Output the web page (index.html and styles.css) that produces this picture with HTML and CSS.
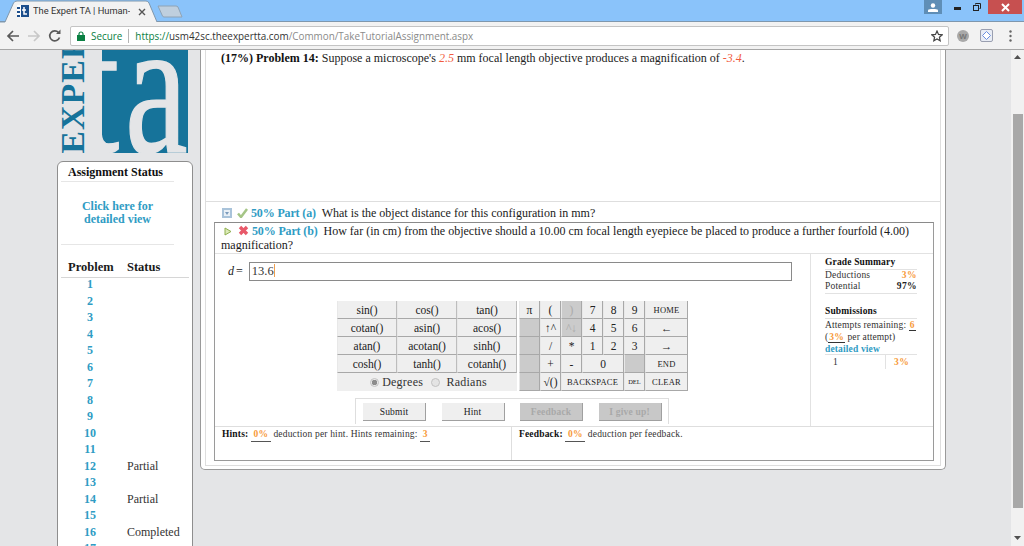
FILE: index.html
```html
<!DOCTYPE html>
<html lang="en">
<head>
<meta charset="utf-8">
<title>The Expert TA</title>
<link rel="stylesheet" href="styles.css">
</head>
<body>
<header class="chrome">
  <div class="tabbar">
    <div class="tab">
      <svg class="tab-shape" width="157" height="22" viewBox="0 0 157 22"><path d="M0 22H5L13.500 3Q14.500 1 17 1H146Q148 1 149 3L157 22" fill="#f2f2f2" stroke="#7f97ad"/></svg>
      <svg class="favicon" width="12" height="12" viewBox="0 0 12 12"><rect width="12" height="12" fill="#fff"/><rect x="4" width="8" height="12" fill="#1d4f8c"/><rect x="0" y="2" width="3" height="2" fill="#1d4f8c"/><rect x="0" y="6" width="3" height="2" fill="#1d4f8c"/><rect x="0" y="10" width="3" height="2" fill="#1d4f8c"/><path d="M7 2v7h3M5 5h4" stroke="#fff" stroke-width="1.500" fill="none"/></svg>
      <span class="tab-title">The Expert TA | Human-I</span>
      <svg class="tab-close" width="8" height="8" viewBox="0 0 8 8"><path d="M1 1l6 6M7 1l-6 6" stroke="#555" stroke-width="1.400"/></svg>
    </div>
    <svg class="newtab" width="26" height="13" viewBox="0 0 26 13"><path d="M1 1H19Q20 1 21 2L25 12H7Q6 12 5.500 11Z" fill="#bfcfde" stroke="#8ea3b6"/></svg>
    <div class="winctl">
      <div class="user"><svg width="10" height="9" viewBox="0 0 10 9"><circle cx="5" cy="2.500" r="2.200" fill="#fff"/><path d="M0 9V7.500Q0 6 3 6H7Q10 6 10 7.500V9Z" fill="#fff"/></svg></div>
      <svg class="ctl-min" width="7" height="3" viewBox="0 0 7 3"><rect width="7" height="3" fill="#222"/></svg>
      <svg class="ctl-max" width="8" height="8" viewBox="0 0 8 8"><path d="M2.500 1.500V.5H7.500V5.500H6.500" fill="none" stroke="#222"/><rect x=".5" y="2.500" width="5" height="5" fill="none" stroke="#222"/></svg>
      <div class="close"><svg width="9" height="9" viewBox="0 0 9 9"><path d="M1 1l7 7M8 1l-7 7" stroke="#fff" stroke-width="2"/></svg></div>
    </div>
  </div>
  <div class="toolbar">
    <svg class="nav" width="14" height="14" viewBox="0 0 14 14"><path d="M13 7H2M7 2L2 7l5 5" fill="none" stroke="#5a5a5a" stroke-width="1.700"/></svg>
    <svg class="nav" width="14" height="14" viewBox="0 0 14 14"><path d="M1 7h11M7 2l5 5-5 5" fill="none" stroke="#c8c8c8" stroke-width="1.700"/></svg>
    <svg class="nav" width="14" height="14" viewBox="0 0 14 14"><path d="M11.500 8.500A5 5 0 1 1 10.500 3.500" fill="none" stroke="#5a5a5a" stroke-width="1.700"/><path d="M8 5h4.500V.5z" fill="#5a5a5a"/></svg>
    <div class="omnibox">
      <svg class="lock" width="8" height="10" viewBox="0 0 8 10"><rect y="4" width="8" height="6" fill="#0b8043"/><path d="M2 4.500V3a2 2 0 0 1 4 0v1.500" fill="none" stroke="#0b8043" stroke-width="1.200"/></svg>
      <span class="secure">Secure</span>
      <span class="url"><span class="https">https://</span><span class="host">usm42sc.theexpertta.com</span>/Common/TakeTutorialAssignment.aspx</span>
      <svg class="star" width="12" height="12" viewBox="0 0 12 12"><path d="M6 1l1.500 3.400 3.700.4-2.800 2.400.8 3.600L6 9l-3.200 1.800.8-3.600L.8 4.800l3.700-.4z" fill="none" stroke="#444" stroke-width="1.200"/></svg>
    </div>
    <svg class="ext ext-w" width="14" height="14" viewBox="0 0 14 14"><circle cx="7" cy="7" r="6" fill="#a9a9a9"/><text x="7" y="10" class="ext-w-t" text-anchor="middle">W</text></svg>
    <svg class="ext ext-d" width="14" height="14" viewBox="0 0 14 14"><rect x=".5" y=".5" width="12" height="12" rx="1.500" fill="#e9edf5" stroke="#9a9fb0"/><path d="M6.500 2.500l4 4-4 4-4-4z" fill="#fff" stroke="#6a8fe0"/></svg>
    <svg class="dots" width="3" height="12" viewBox="0 0 3 12"><circle cx="1.500" cy="1.500" r="1.200" fill="#666"/><circle cx="1.500" cy="6" r="1.200" fill="#666"/><circle cx="1.500" cy="10.500" r="1.200" fill="#666"/></svg>
  </div>
</header>

<div class="viewport">
  <div class="page">
    <aside class="side">
      <div class="logo">
        <div class="logo-word"><span class="expert">EXPERT</span></div>
        <div class="logo-box"><span class="logo-ta">ta</span></div>
      </div>
      <section class="status">
        <h2 class="status-title">Assignment Status</h2>
        <a class="status-link">Click here for<br>detailed view</a>
        <div class="status-head"><span class="col-p">Problem</span><span class="col-s">Status</span></div>
        <div class="rows">
          <div class="row"><span class="col-p num">1</span><span class="col-s"></span></div>
          <div class="row"><span class="col-p num">2</span><span class="col-s"></span></div>
          <div class="row"><span class="col-p num">3</span><span class="col-s"></span></div>
          <div class="row"><span class="col-p num">4</span><span class="col-s"></span></div>
          <div class="row"><span class="col-p num">5</span><span class="col-s"></span></div>
          <div class="row"><span class="col-p num">6</span><span class="col-s"></span></div>
          <div class="row"><span class="col-p num">7</span><span class="col-s"></span></div>
          <div class="row"><span class="col-p num">8</span><span class="col-s"></span></div>
          <div class="row"><span class="col-p num">9</span><span class="col-s"></span></div>
          <div class="row"><span class="col-p num">10</span><span class="col-s"></span></div>
          <div class="row"><span class="col-p num">11</span><span class="col-s"></span></div>
          <div class="row"><span class="col-p num">12</span><span class="col-s">Partial</span></div>
          <div class="row"><span class="col-p num">13</span><span class="col-s"></span></div>
          <div class="row"><span class="col-p num">14</span><span class="col-s">Partial</span></div>
          <div class="row"><span class="col-p num">15</span><span class="col-s"></span></div>
          <div class="row"><span class="col-p num">16</span><span class="col-s">Completed</span></div>
          <div class="row"><span class="col-p num">17</span><span class="col-s"></span></div>
        </div>
      </section>
    </aside>

    <main class="panel">
      <div class="panel-inner">
        <div class="problem">
          <b>(17%) Problem 14:</b> Suppose a microscope's <i class="val">2.5</i> mm focal length objective produces a magnification of <i class="val">-3.4</i>.
        </div>
        <div class="part-a">
          <svg class="ico ico-box" width="10" height="10" viewBox="0 0 10 10"><rect width="10" height="10" fill="#a9c3da"/><rect x="2" y="2" width="6" height="6" fill="#e9f0f6"/><path d="M3 4h4L5 7z" fill="#7c9cbd"/></svg>
          <svg class="ico" width="11" height="10" viewBox="0 0 11 10"><path d="M1 5.500l3 3.500 6-8" fill="none" stroke="#a5c586" stroke-width="2.500"/></svg>
          <span class="pct">50% Part (a)</span>&nbsp; What is the object distance for this configuration in mm?
        </div>
        <div class="part-b">
          <div class="part-b-q">
            <svg class="ico ico-play" width="8" height="9" viewBox="0 0 8 9"><path d="M1 1l6 3.500L1 8z" fill="#dcebb8" stroke="#8fb04f"/></svg>
            <svg class="ico" width="11" height="11" viewBox="0 0 11 11"><path d="M2 2l7 7M9 2l-7 7" stroke="#e8596a" stroke-width="3.400"/></svg>
            <span class="pct">50% Part (b)</span>&nbsp; How far (in cm) from the objective should a 10.00 cm focal length eyepiece be placed to produce a further fourfold (4.00) magnification?
          </div>
          <div class="work">
            <div class="work-left">
              <div class="answer"><i class="var">d</i><span class="eq">=</span><div class="input">13.6<span class="caret"></span></div></div>
              <div class="calc">
                <div class="funcs">
                  <span class="k">sin()</span><span class="k">cos()</span><span class="k">tan()</span>
                  <span class="k">cotan()</span><span class="k">asin()</span><span class="k">acos()</span>
                  <span class="k">atan()</span><span class="k">acotan()</span><span class="k">sinh()</span>
                  <span class="k">cosh()</span><span class="k">tanh()</span><span class="k">cotanh()</span>
                  <div class="mode"><span class="radio on"></span>Degrees <span class="radio"></span>&nbsp;Radians</div>
                </div>
                <div class="keys">
                  <span class="k">π</span><span class="k">(</span><span class="k off">)</span><span class="k">7</span><span class="k">8</span><span class="k">9</span><span class="k sm">HOME</span>
                  <span class="k off"></span><span class="k">↑^</span><span class="k off">^↓</span><span class="k">4</span><span class="k">5</span><span class="k">6</span><span class="k">←</span>
                  <span class="k off"></span><span class="k">/</span><span class="k">*</span><span class="k">1</span><span class="k">2</span><span class="k">3</span><span class="k">→</span>
                  <span class="k off"></span><span class="k">+</span><span class="k">-</span><span class="k span2">0</span><span class="k off"></span><span class="k sm">END</span>
                  <span class="k off"></span><span class="k">√()</span><span class="k sm span3">BACKSPACE</span><span class="k xs">DEL</span><span class="k sm">CLEAR</span>
                </div>
              </div>
              <div class="actions">
                <span class="btn">Submit</span><span class="btn">Hint</span><span class="btn dis">Feedback</span><span class="btn dis">I give up!</span>
              </div>
            </div>
            <div class="grade">
              <h3 class="grade-h">Grade Summary</h3>
              <div class="grade-row first"><span>Deductions</span><span class="orange">3%</span></div>
              <div class="grade-row last"><span>Potential</span><b class="strong">97%</b></div>
              <h3 class="grade-h sub">Submissions</h3>
              <div class="attempts">Attempts remaining: <span class="ul orange">6</span><br>(<span class="ul orange">3%</span> per attempt)<br><a class="detail">detailed view</a></div>
              <div class="sub-row"><span class="sub-n">1</span><span class="orange sub-p">3%</span></div>
            </div>
          </div>
          <div class="notes">
            <div class="note note-l"><b>Hints:</b> <span class="blank orange">0%</span> deduction per hint. Hints remaining: <span class="blank short orange">3</span></div>
            <div class="note"><b>Feedback:</b> <span class="blank orange">0%</span> deduction per feedback.</div>
          </div>
        </div>
      </div>
    </main>
  </div>
  <div class="scrollbar">
    <svg class="sb-up" width="7" height="4" viewBox="0 0 7 4"><path d="M3.500 0L7 4H0z" fill="#505050"/></svg>
    <div class="sb-thumb"></div>
    <svg class="sb-down" width="7" height="4" viewBox="0 0 7 4"><path d="M0 0H7L3.500 4z" fill="#505050"/></svg>
  </div>
</div>
</body>
</html>
```

FILE: styles.css
```css
* { box-sizing: border-box; }
html, body { margin: 0; height: 546px; overflow: hidden; }
body { font-family: "Liberation Serif", "Times New Roman", serif; font-size: 12px; color: #1a1a1a; background: #e4e5e7; display: flex; flex-direction: column; }
b { font-weight: 700; }

.chrome { flex: none; height: 50px; font-family: "Open Sans", "Liberation Sans", sans-serif; }
.tabbar { height: 22px; background: #8ac3fa; display: flex; align-items: flex-start; border-bottom: 1px solid #7f97ad; }
.tab { position: relative; width: 157px; height: 22px; padding: 5px 0 0 17px; display: flex; align-items: flex-start; flex: none; }
.tab-shape { position: absolute; left: 0; top: 0; overflow: visible; }
.favicon { position: relative; flex: none; }
.tab-title { position: relative; width: 97px; overflow: hidden; white-space: nowrap; margin-left: 4px; font-family: Roboto, sans-serif; font-size: 9.300px; line-height: 12px; color: #333; }
.tab-close { position: relative; margin: 3px 0 0 8px; }
.newtab { margin-top: 5px; flex: none; }
.winctl { margin-left: auto; display: flex; align-items: flex-start; }
.user { width: 18px; height: 14px; background: #5f8eb6; display: flex; align-items: center; justify-content: center; margin-right: 12px; }
.ctl-min { margin: 7px 12px 0 0; }
.ctl-max { margin: 3px 7px 0 0; }
.close { width: 34px; height: 14px; background: #c75050; margin-right: 2px; display: flex; align-items: center; justify-content: center; }

.toolbar { height: 28px; background: #f2f2f2; border-bottom: 1px solid #a6a6a6; display: flex; align-items: center; padding-left: 6px; }
.nav { margin-right: 7px; flex: none; }
.omnibox { width: 879px; height: 20px; margin-left: 1px; background: #fff; border: 1px solid #c4c4c4; border-radius: 2px; display: flex; align-items: center; padding-left: 6px; font-size: 9.900px; white-space: nowrap; }
.lock { flex: none; }
.secure { color: #0b8043; margin-left: 6px; padding-right: 6px; border-right: 1px solid #b5b5b5; line-height: 14px; }
.url { margin-left: 6px; color: #8a8a8a; }
.https { color: #0b8043; }
.host { color: #333; }
.star { margin-left: auto; margin-right: 5px; }
.ext { flex: none; }
.ext-w { margin-left: 7px; }
.ext-d { margin-left: 10px; }
.ext-w-t { font-size: 8px; font-family: "Liberation Sans", sans-serif; fill: #777; font-weight: 700; }
.dots { margin-left: 15px; flex: none; }

.viewport { flex: 1; min-height: 0; display: flex; overflow: hidden; }
.page { flex: 1; min-width: 0; display: flex; align-items: flex-start; padding-left: 57px; }
.side { width: 136px; flex: none; }
.logo { height: 103px; margin-bottom: 8px; display: flex; overflow: hidden; }
.logo-word { width: 31px; height: 104px; overflow: hidden; position: relative; }
.expert { position: absolute; right: 3px; bottom: 0; writing-mode: vertical-rl; transform: rotate(180deg); font-size: 34px; line-height: 24px; font-weight: 700; color: #16739a; white-space: nowrap; letter-spacing: 1px; }
.logo-box { width: 100px; height: 103px; background: linear-gradient(90deg, #e4e5e7 14px, #16739a 14px); overflow: hidden; }
.logo-ta { display: block; width: 100px; color: #e4e5e7; font-size: 196px; line-height: 140px; white-space: nowrap; letter-spacing: 8px; margin-top: -34px; transform: translateX(-8px) scaleX(.72); transform-origin: 0 0; -webkit-text-stroke: 1.500px #e4e5e7; }

.status { background: #fff; border: 1px solid #8e8e8e; border-radius: 6px; padding: 0 0 0 3px; height: 400px; }
.status-title { margin: 0; width: 113px; padding: 3px 0 2px 7px; font-size: 12px; font-weight: 700; line-height: 14px; color: #111; border-bottom: 1px solid #e6e6e6; }
.status-link { display: block; width: 113px; height: 63px; padding-top: 18px; text-align: center; color: #2f9cc4; font-weight: 700; font-size: 12px; line-height: 13px; border-bottom: 1px solid #e6e6e6; margin-bottom: 14px; }
.status-head { display: flex; font-weight: 700; font-size: 12.500px; line-height: 16px; padding-bottom: 2px; border-bottom: 1px solid #d6d6d6; margin-right: 3px; }
.rows { margin-top: -2px; }
.row { display: flex; height: 16.500px; line-height: 16.500px; font-size: 12px; color: #333; }
.col-p { width: 66px; padding-left: 7px; flex: none; }
.col-s { flex: 1; }
.num { text-align: center; color: #2f9cc4; font-weight: 700; padding-left: 0; padding-right: 8px; }

.panel { width: 746px; margin-left: 7px; height: 420px; background: #fff; border: 1px solid #9a9a9a; border-top: 0; border-radius: 0 0 5px 5px; padding: 0 4px 3px 4px; }
.panel-inner { height: 416px; border: 1px solid #dedede; border-top: 0; padding: 0 7px 0 8px; display: flex; flex-direction: column; }
.problem { height: 152px; margin: 0 -7px 0 -8px; padding: 1px 0 0 15px; font-size: 12px; line-height: 14px; border-bottom: 1px solid #dedede; color: #222; }
.problem b { color: #111; }
.val { color: #f15b40; font-weight: 400; }
.part-a { height: 20px; padding: 4px 0 0 8px; line-height: 15px; font-size: 12px; white-space: nowrap; }
.ico { vertical-align: -1px; }
.ico-box { margin-right: 2px; }
.ico-play { margin: 0 3px; }
.pct { color: #2f9cc4; font-weight: 700; letter-spacing: -.15px; }
.part-b { width: 720px; height: 239px; border: 1px solid #9a9a9a; border-top-color: #8a8a8a; display: flex; flex-direction: column; }
.part-b-q { height: 31px; padding: 1px 4px 0 6px; line-height: 14px; font-size: 12px; border-bottom: 1px solid #e2e2e2; }
.work { height: 173px; display: flex; border-bottom: 1px solid #dedede; }
.work-left { width: 595px; flex: none; display: flex; flex-direction: column; }
.answer { display: flex; align-items: center; height: 18px; margin-top: 8px; padding-left: 13px; font-size: 12px; }
.var { margin-right: 2px; }
.eq { margin-right: 6px; }
.input { width: 543px; height: 19px; border: 1px solid #8a8a8a; padding-left: 2px; line-height: 17px; font-size: 12.500px; color: #333; }
.caret { display: inline-block; width: 1px; height: 13px; background: #f0a050; vertical-align: -2px; }

.calc { display: flex; margin: 21px 0 0 122px; gap: 2px; }
.funcs { display: grid; grid-template-columns: repeat(3, 60px); grid-auto-rows: 18px; }
.keys { display: grid; grid-template-columns: repeat(6, 21px) 43px; grid-auto-rows: 18px; }
.k { display: flex; align-items: center; justify-content: center; background: #efefef; border-right: 1px solid #a8a8a8; border-bottom: 1px solid #a8a8a8; border-left: 1px solid #e8e8e8; font-size: 11.500px; color: #222; white-space: nowrap; }
.funcs .k { border-right-color: #bdbdbd; }
.k.off { background: #cbcbcb; color: #aaa; }
.k.sm { font-size: 8.500px; letter-spacing: .2px; }
.k.xs { font-size: 6.500px; }
.span2 { grid-column: span 2; }
.span3 { grid-column: span 3; }
.mode { grid-column: span 3; background: #efefef; display: flex; align-items: center; justify-content: center; font-size: 12px; color: #333; letter-spacing: .25px; padding-right: 2px; gap: 3px; }
.radio { width: 9px; height: 9px; border-radius: 50%; background: #e4e4e4; border: 1px solid #c2c2c2; display: inline-block; margin-left: 5px; }
.radio.on { background: radial-gradient(circle, #8c8c8c 0 2.500px, #e8e8e8 3px); }

.actions { width: 314px; height: 26px; margin: 7px 0 0 140px; border: 1px solid #dedede; border-bottom: 0; display: flex; gap: 15.500px; padding: 4px 0 0 7px; }
.btn { width: 63px; height: 18px; flex: none; background: #efefef; border-right: 1px solid #a0a0a0; border-bottom: 1px solid #a0a0a0; display: flex; align-items: center; justify-content: center; font-size: 9.500px; color: #222; letter-spacing: .2px; }
.btn.dis { background: #c8c8c8; color: #a8a8a8; font-weight: 700; }

.grade { flex: 1; border-left: 1px solid #e2e2e2; padding: 2px 0 0 14px; font-size: 9.500px; color: #333; }
.grade-h { margin: 0; font-size: 9.500px; line-height: 13px; font-weight: 700; color: #111; letter-spacing: .15px; }
.grade-row { width: 92px; display: flex; justify-content: space-between; letter-spacing: .2px; }
.grade-row.first { border-top: 1px solid #e2e2e2; height: 12px; line-height: 10px; }
.grade-row.last { border-bottom: 1px solid #e2e2e2; height: 13px; line-height: 10px; }
.strong { font-weight: 700; letter-spacing: .4px; color: #222; }
.orange { color: #f79a3a; font-weight: 700; }
.grade-row .orange { letter-spacing: .5px; }
.grade-h.sub { margin-top: 11px; }
.attempts { width: 92px; border-top: 1px solid #e2e2e2; line-height: 12px; white-space: nowrap; letter-spacing: .15px; margin-bottom: -1px; }
.ul { border-bottom: 1px solid #333; padding: 0 1px; }
.detail { color: #2f9cc4; font-weight: 700; }
.sub-row { width: 92px; border-top: 1px solid #e2e2e2; display: flex; height: 15px; line-height: 14px; }
.sub-n { width: 61px; padding-left: 8px; border-right: 1px solid #e2e2e2; color: #333; }
.sub-p { padding-left: 8px; letter-spacing: .5px; }

.notes { flex: 1; display: flex; }
.note { padding: 1px 0 0 7px; font-size: 9.500px; line-height: 13px; color: #333; letter-spacing: .17px; }
.note b { color: #111; }
.note-l { width: 297px; border-right: 1px solid #dedede; }
.blank { display: inline-block; min-width: 20px; border-bottom: 1px solid #555; text-align: center; line-height: 12px; height: 14px; }
.blank.short { min-width: 10px; }

.scrollbar { width: 13px; flex: none; background: #f1f1f1; display: flex; flex-direction: column; align-items: center; }
.sb-up { margin-top: 5px; flex: none; }
.sb-thumb { width: 10px; height: 394px; margin: 55px 0 0 1px; background: #a8a8a8; flex: none; }
.sb-down { margin-top: auto; margin-bottom: 6px; flex: none; }
```
